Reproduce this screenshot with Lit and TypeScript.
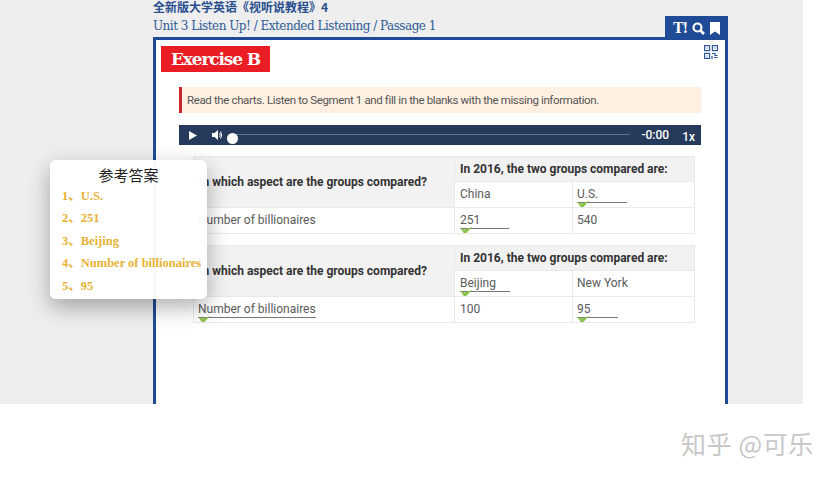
import { LitElement, html, css } from "lit";
import { customElement } from "lit/decorators.js";

const check = html`<svg class="check" width="12" height="7" viewBox="0 0 12 7"><path d="M0 .5 L4.500 2.500 L12 0 L6 6.500 L4 6.500 Z" fill="#8bc34a"/></svg>`;

@customElement("app-root")
export class AppRoot extends LitElement {
  static styles = css`
    :host { display: block; width: 834px; height: 477px; background: #fff; position: relative; overflow: hidden; font-family: Roboto, sans-serif; }
    .stage { width: 803px; height: 404px; box-sizing: border-box; background: #eee; padding-left: 153px; overflow: hidden; }
    .book { height: 13px; font: bold 12px/13px "Noto Sans CJK SC", sans-serif; color: #2a4f8f; white-space: nowrap; }
    .crumb { margin-top: 4px; height: 20px; font: 12px/18px "DejaVu Serif", serif; letter-spacing: -.5px; color: #2f5a96; white-space: nowrap; }
    .wrap { width: 575px; position: relative; }
    .tools { position: absolute; right: 0; top: -21px; width: 63px; height: 24px; background: #1f4b96; color: #fff; display: flex; align-items: center; gap: 5px; padding-left: 8px; box-sizing: border-box; z-index: 1; }
    .tools .t { font: bold 16px/24px "Liberation Serif", serif; letter-spacing: -1px; width: 14px; white-space: nowrap; }
    .tools svg { flex: none; }
    .panel { height: 380px; box-sizing: border-box; border: 3px solid #1f4b96; border-bottom: 0; background: #fff; padding: 6px 0 0 5px; position: relative; }
    .ex { width: 109px; height: 26px; background: #ea1c24; color: #fff; font: bold 17px/26px "DejaVu Serif", serif; letter-spacing: -1.15px; padding-left: 10px; box-sizing: border-box; white-space: nowrap; }
    .qr { position: absolute; right: 7px; top: 5px; }
    .note { margin: 15px 0 0 18px; width: 522px; height: 26px; box-sizing: border-box; background: #fff0e2; border-left: 3px solid #c9262c; padding-left: 5px; font: 11.5px/26px Roboto, sans-serif; letter-spacing: -.37px; color: #555; white-space: nowrap; }
    .player { margin: 12px 0 0 18px; width: 522px; height: 20px; background: #263a5c; color: #fff; display: flex; align-items: center; box-sizing: border-box; position: relative; }
    .track { position: absolute; left: 50px; width: 401px; top: 9px; height: 1px; background: #5f7190; }
    .knob { position: absolute; left: 48px; top: 8px; width: 11px; height: 11px; border-radius: 50%; background: #fff; }
    .play { margin-left: 10px; }
    .vol { margin-left: 15px; }
    .time { margin-left: auto; font: 500 12px/16px Roboto, sans-serif; }
    .speed { margin: 3px 6px 0 13px; font: 500 12px/16px Roboto, sans-serif; }
    table { border-collapse: collapse; table-layout: fixed; width: 501px; margin-left: 32px; font-size: 12px; color: #5a5a5a; }
    table.first { margin-top: 11px; }
    table.second { margin-top: 11px; }
    td, th { border: 1px solid #e9e9e9; padding: 0 0 0 5px; height: 25px; box-sizing: border-box; text-align: left; white-space: nowrap; overflow: hidden; }
    td { padding-bottom: 2px; }
    td.c3 { padding-left: 4px; }
    td.c1 { padding-left: 4px; }
    th { background: #f2f2f2; color: #333; font-weight: 700; font-size: 12px; }
    .blank { position: relative; display: block; height: 16px; margin-top: 2px; line-height: 15px; box-sizing: border-box; border-bottom: 1px solid #777; }
    .check { position: absolute; left: 0; top: 14px; }
    .popup { position: absolute; left: 50px; top: 160px; width: 157px; height: 139px; box-sizing: border-box; padding: 6px 0 0 12px; background: rgba(255,255,255,.96); border-radius: 6px; box-shadow: 0 8px 22px rgba(0,0,0,.32); }
    .popup h4 { margin: 0 0 0 -12px; height: 19px; text-align: center; font: 400 15px/18px "Noto Sans CJK SC", sans-serif; color: #222; }
    .popup div { font: bold 12.5px/22.4px "Liberation Serif", "Noto Sans CJK SC", serif; color: #e8b234; white-space: nowrap; }
    .mark { position: absolute; left: 681px; top: 428px; font: 400 25px/30px "Noto Sans CJK SC", sans-serif; letter-spacing: .6px; color: #c8c8c8; white-space: nowrap; }
  `;

  private table(cls: string, a: unknown, b: unknown, c: unknown, d: unknown, e: unknown) {
    return html`<table class=${cls}>
      <colgroup><col style="width:261px" /><col style="width:118px" /><col style="width:122px" /></colgroup>
      <tr><th rowspan="2">In which aspect are the groups compared?</th><th colspan="2">In 2016, the two groups compared are:</th></tr>
      <tr style="height:26px"><td>${a}</td><td class="c3">${b}</td></tr>
      <tr style="height:26px"><td class="c1">${c}</td><td>${d}</td><td class="c3">${e}</td></tr>
    </table>`;
  }

  private blank(text: string, width: number) {
    return html`<span class="blank" style="width:${width}px">${text}${check}</span>`;
  }

  render() {
    return html`
      <div class="stage">
        <div class="book">全新版大学英语《视听说教程》4</div>
        <div class="crumb">Unit 3 Listen Up! / Extended Listening / Passage 1</div>
        <div class="wrap">
          <div class="tools">
            <span class="t">T!</span>
            <svg width="13" height="13" viewBox="0 0 13 13"><circle cx="5.500" cy="5.500" r="4" fill="none" stroke="#fff" stroke-width="2.200"/><path d="M8.500 8.500 L12 12" stroke="#fff" stroke-width="2.600"/></svg>
            <svg width="10" height="13" viewBox="0 0 10 13"><path d="M0 0H10V13L5 9.500L0 13Z" fill="#fff"/></svg>
          </div>
          <div class="panel">
            <div class="ex">Exercise B</div>
            <svg class="qr" width="14" height="14" viewBox="0 0 14 14" fill="none" stroke="#2f5a96" stroke-width="1.200">
              <rect x=".6" y=".6" width="5" height="5"/><rect x="8.400" y=".6" width="5" height="5"/><rect x=".6" y="8.400" width="5" height="5"/>
              <path d="M2.500 3h1M10.500 3h1M2.500 11h1M8 8.500h3v2h2.500M8 11v3M10 12.500h3.500" />
            </svg>
            <div class="note">Read the charts. Listen to Segment 1 and fill in the blanks with the missing information.</div>
            <div class="player">
              <div class="track"></div><div class="knob"></div>
              <svg class="play" width="8" height="9" viewBox="0 0 8 9"><path d="M0 0L8 4.500L0 9Z" fill="#fff"/></svg>
              <svg class="vol" width="11" height="10" viewBox="0 0 11 10"><path d="M0 3H2.500L6 0V10L2.500 7H0Z" fill="#fff"/><path d="M7.500 3Q9 5 7.500 7M8.500 1.500Q11 5 8.500 8.500" stroke="#fff" fill="none"/></svg>
              <span class="time">-0:00</span>
              <span class="speed">1x</span>
            </div>
            ${this.table("first", "China", this.blank("U.S.", 50), "Number of billionaires", this.blank("251", 49), "540")}
            ${this.table("second", this.blank("Beijing", 50), "New York", this.blank("Number of billionaires", 118), "100", this.blank("95", 41))}
          </div>
        </div>
      </div>
      <div class="popup">
        <h4>参考答案</h4>
        <div>1、U.S.</div>
        <div>2、251</div>
        <div>3、Beijing</div>
        <div>4、Number of billionaires</div>
        <div>5、95</div>
      </div>
      <div class="mark">知乎 @可乐</div>
    `;
  }
}
